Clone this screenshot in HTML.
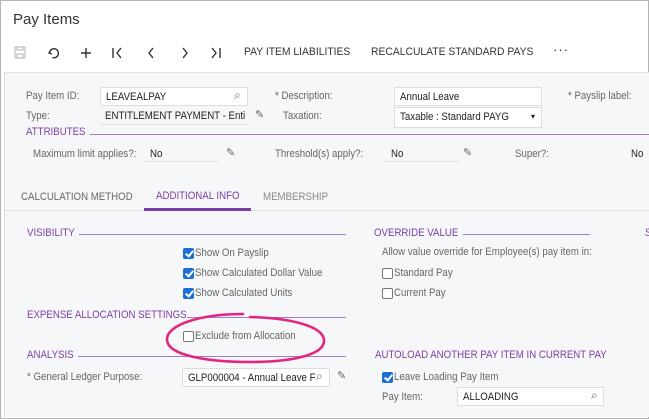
<!DOCTYPE html><html><head><style>
*{box-sizing:border-box;margin:0;padding:0}
body{width:649px;height:419px;overflow:hidden;background:#fff;font-family:"Liberation Sans",sans-serif;position:relative;color:#555}
.a{position:absolute;white-space:nowrap}
.lbl,.val,.h{transform:scaleX(.88);transform-origin:0 50%}
.lbl{font-size:11px;color:#666}
.val{font-size:11px;color:#222}
.h{font-size:11px;color:#7c3fa6}
.line{position:absolute;height:1px;background:#a57cc6}
.inp{position:absolute;background:#fff;border:1px solid #ddd;height:19px;font-size:11px;color:#222;padding:2px 5px;line-height:14px;white-space:nowrap;overflow:hidden}
.inp span.t{display:inline-block;transform:scaleX(.88);transform-origin:0 50%}
.und{position:absolute;border-bottom:1px solid #ddd;height:19px}
.cb{position:absolute;width:11px;height:11px;border:1px solid #777;border-radius:2px;background:#fff}
.cb.on{background:#1c6fd6;border-color:#1c6fd6}
.cb.on:after{content:"";position:absolute;left:3px;top:0px;width:3px;height:6px;border:solid #fff;border-width:0 2px 2px 0;transform:rotate(40deg)}
.tb{font-size:11px;color:#333;transform:scaleX(.94);transform-origin:0 50%}
</style></head><body>
<div class="a" style="left:0;top:0;width:649px;height:419px;border:1px solid #b4b4b4"></div>
<div class="a" style="left:13px;top:11px;font-size:15px;color:#333">Pay Items</div>
<svg class="a" style="left:0;top:40px" width="240" height="25" viewBox="0 0 240 25" fill="none" stroke-width="1.4">
<g stroke="#c8c8c8"><rect x="15" y="7" width="10" height="11" rx="1"/><path d="M17 7v3h6V7M17 18v-4h6v4"/></g>
<g stroke="#333"><path d="M51 10l-2 3 3 1M49.5 12.5a4.5 4.5 0 1 1 3 5"/>
<path d="M86 8v10M81 13h10"/><path d="M113 8v10M121 8l-4 5 4 5"/><path d="M153 8l-4 5 4 5"/><path d="M183 8l4 5-4 5"/><path d="M212 8l4 5-4 5M220 8v10"/></g></svg>
<div class="a tb" style="left:244px;top:46px">PAY ITEM LIABILITIES</div>
<div class="a tb" style="left:371px;top:46px">RECALCULATE STANDARD PAYS</div>
<div class="a" style="left:553px;top:42px;font-size:13px;letter-spacing:1px;color:#333">···</div>
<div class="a" style="left:4px;top:72px;width:645px;height:345px;background:#f6f7f9;border-top:1px solid #e2e2e2;border-left:1px solid #ddd"></div>
<div class="a lbl" style="left:26px;top:90px">Pay Item ID:</div>
<div class="inp" style="left:100px;top:87px;width:148px"><span class="t">LEAVEALPAY</span></div>
<div class="a" style="left:234px;top:88px;font-size:12px;color:#666">⌕</div>
<div class="a lbl" style="left:275px;top:90px">* Description:</div>
<div class="inp" style="left:394px;top:87px;width:148px"><span class="t">Annual Leave</span></div>
<div class="a lbl" style="left:568px;top:90px">* Payslip label:</div>
<div class="a lbl" style="left:26px;top:110px">Type:</div>
<div class="und" style="left:100px;top:106px;width:148px"></div>
<div class="a val" style="left:105px;top:110px">ENTITLEMENT PAYMENT - Enti</div>
<div class="a" style="left:255px;top:108px;font-size:11px;color:#666">✎</div>
<div class="a lbl" style="left:283px;top:110px">Taxation:</div>
<div class="inp" style="left:394px;top:107px;width:148px;height:21px"><span class="t">Taxable : Standard PAYG</span><span style="position:absolute;right:6px;top:2px;font-size:8px">▾</span></div>
<div class="a h" style="left:26px;top:126px">ATTRIBUTES</div>
<div class="line" style="left:90px;top:134px;width:559px"></div>
<div class="a lbl" style="left:33px;top:148px">Maximum limit applies?:</div>
<div class="und" style="left:144px;top:143px;width:74px"></div>
<div class="a val" style="left:150px;top:148px">No</div>
<div class="a" style="left:226px;top:146px;font-size:11px;color:#666">✎</div>
<div class="a lbl" style="left:275px;top:148px">Threshold(s) apply?:</div>
<div class="und" style="left:385px;top:143px;width:74px"></div>
<div class="a val" style="left:391px;top:148px">No</div>
<div class="a" style="left:463px;top:146px;font-size:11px;color:#666">✎</div>
<div class="a lbl" style="left:515px;top:148px">Super?:</div>
<div class="a val" style="left:631px;top:148px">No</div>
<div class="a lbl" style="left:21px;top:191px">CALCULATION METHOD</div>
<div class="a h" style="left:156px;top:190px">ADDITIONAL INFO</div>
<div class="a lbl" style="left:263px;top:191px;color:#888">MEMBERSHIP</div>
<div class="a" style="left:4px;top:210px;width:645px;height:1px;background:#ddd"></div>
<div class="a" style="left:144px;top:208px;width:107px;height:3px;background:#7c3fa6"></div>
<div class="a h" style="left:27px;top:227px">VISIBILITY</div>
<div class="line" style="left:79px;top:234px;width:267px"></div>
<div class="a h" style="left:374px;top:227px">OVERRIDE VALUE</div>
<div class="line" style="left:463px;top:234px;width:127px"></div>
<div class="a h" style="left:645px;top:227px">S</div>
<div class="cb on" style="left:183px;top:248px"></div><div class="a lbl" style="left:195px;top:247px">Show On Payslip</div>
<div class="cb on" style="left:183px;top:268px"></div><div class="a lbl" style="left:195px;top:267px">Show Calculated Dollar Value</div>
<div class="cb on" style="left:183px;top:288px"></div><div class="a lbl" style="left:195px;top:287px">Show Calculated Units</div>
<div class="a lbl" style="left:382px;top:246px">Allow value override for Employee(s) pay item in:</div>
<div class="cb" style="left:382px;top:268px"></div><div class="a lbl" style="left:394px;top:267px">Standard Pay</div>
<div class="cb" style="left:382px;top:288px"></div><div class="a lbl" style="left:394px;top:287px">Current Pay</div>
<div class="a h" style="left:27px;top:309px">EXPENSE ALLOCATION SETTINGS</div>
<div class="line" style="left:187px;top:317px;width:159px"></div>
<div class="cb" style="left:183px;top:331px"></div><div class="a lbl" style="left:195px;top:330px">Exclude from Allocation</div>
<div class="a h" style="left:27px;top:349px">ANALYSIS</div>
<div class="line" style="left:78px;top:356px;width:268px"></div>
<div class="a h" style="left:375px;top:349px">AUTOLOAD ANOTHER PAY ITEM IN CURRENT PAY</div>
<div class="a lbl" style="left:27px;top:371px">* General Ledger Purpose:</div>
<div class="inp" style="left:182px;top:368px;width:148px"><span class="t">GLP000004 - Annual Leave F</span></div>
<div class="a" style="left:316px;top:369px;font-size:12px;color:#666;background:#fff">⌕</div>
<div class="a" style="left:337px;top:369px;font-size:11px;color:#666">✎</div>
<div class="cb on" style="left:382px;top:372px"></div><div class="a lbl" style="left:394px;top:371px">Leave Loading Pay Item</div>
<div class="a lbl" style="left:382px;top:391px">Pay Item:</div>
<div class="inp" style="left:457px;top:387px;width:147px"><span class="t">ALLOADING</span></div>
<div class="a" style="left:591px;top:388px;font-size:12px;color:#666">⌕</div>
<svg class="a" style="left:0;top:0" width="649" height="419" fill="none">
<path d="M243 314C200 314 166 325 167 340C168 356 210 362 250 362C295 362 325 354 324 340C323 326 290 318 250 317" stroke="#e3277f" stroke-width="2.6" stroke-linecap="round"/></svg>
</body></html>
